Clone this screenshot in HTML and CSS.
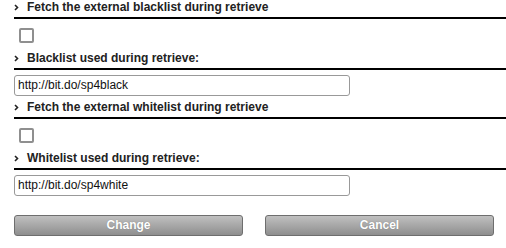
FILE: index.html
```html
<!DOCTYPE html>
<html>
<head>
<meta charset="utf-8">
<link rel="stylesheet" href="styles.css">
</head>
<body>
<div class="form">
  <div class="title"><svg class="chev" width="5" height="7" viewBox="0 0 5 7"><path d="M1 1 L3.5 3.5 L1 6" fill="none" stroke="#222" stroke-width="1.6"/></svg><span>Fetch the external blacklist during retrieve</span></div>
  <div class="field"><span class="check"></span></div>
  <div class="title"><svg class="chev" width="5" height="7" viewBox="0 0 5 7"><path d="M1 1 L3.5 3.5 L1 6" fill="none" stroke="#222" stroke-width="1.6"/></svg><span>Blacklist used during retrieve:</span></div>
  <div class="field field-input"><div class="input">http://bit.do/sp4black</div></div>
  <div class="title"><svg class="chev" width="5" height="7" viewBox="0 0 5 7"><path d="M1 1 L3.5 3.5 L1 6" fill="none" stroke="#222" stroke-width="1.6"/></svg><span>Fetch the external whitelist during retrieve</span></div>
  <div class="field"><span class="check"></span></div>
  <div class="title"><svg class="chev" width="5" height="7" viewBox="0 0 5 7"><path d="M1 1 L3.5 3.5 L1 6" fill="none" stroke="#222" stroke-width="1.6"/></svg><span>Whitelist used during retrieve:</span></div>
  <div class="field field-input"><div class="input">http://bit.do/sp4white</div></div>
  <div class="buttons">
    <div class="btn">Change</div>
    <div class="btn">Cancel</div>
  </div>
</div>
</body>
</html>
```
FILE: styles.css
```css
html, body { margin: 0; padding: 0; background: #fff; }
body { font-family: "Liberation Sans", Arial, sans-serif; font-size: 12px; color: #222; }
.form { padding: 0 0 0 14px; }
.title {
  display: flex; align-items: center; gap: 8px;
  font-weight: bold; font-size: 12px; line-height: 15px;
  color: #222;
  padding: 0 0 2px 0;
  border-bottom: 2px solid #000;
}
.chev { flex: none; }
.field { padding: 9px 0 8px 0; }
.field-input { padding: 5px 0 4px 0; }
.check {
  display: block; width: 11px; height: 11px;
  margin-left: 5px;
  border: 2px solid #8f8f8f; border-radius: 2px; background: #fff;
}
.input {
  width: 328px; height: 19px; line-height: 19px;
  border: 1px solid #999; border-radius: 3px;
  padding: 0 3px; font-size: 12px; color: #111;
}
.buttons { display: flex; gap: 22px; margin-top: 15px; }
.btn {
  width: 227px; height: 19px; line-height: 19px; text-align: center;
  color: #fff; font-weight: bold; font-size: 12px;
  background: linear-gradient(#c0c0c0, #8e8e8e);
  border: 1px solid #6e6e6e; border-radius: 3px;
  text-shadow: 0 0 1px rgba(0,0,0,0.3);
}
```
